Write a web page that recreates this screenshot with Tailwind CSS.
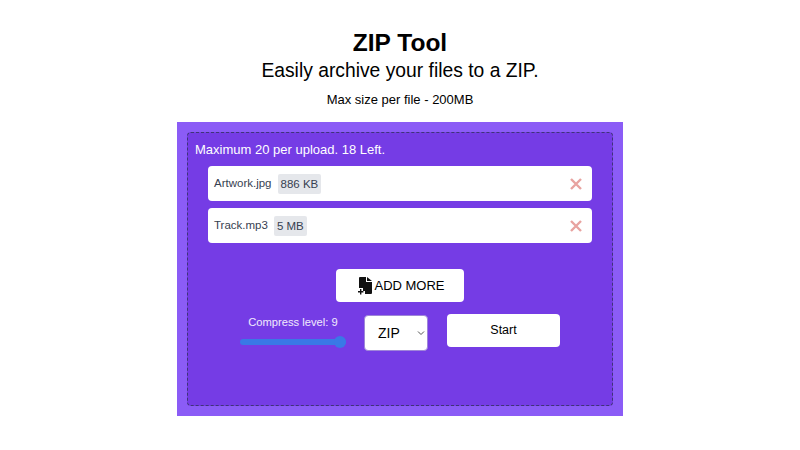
<!DOCTYPE html>
<html lang="en">
    <head>
        <meta charset="UTF-8" />
        <meta name="viewport" content="width=device-width, initial-scale=1.0" />
        <title>ZIP Tool</title>
        <script src="https://cdn.jsdelivr.net/npm/@tailwindcss/browser@4"></script>
    </head>
    <body class="bg-white h-[450px] overflow-hidden flex flex-col items-center font-['Liberation_Sans',Arial,sans-serif] text-black">
        <h1 class="mt-[29px] text-[24.5px] leading-[28px] font-bold">ZIP Tool</h1>
        <p class="text-[19.3px] leading-[28px]">Easily archive your files to a ZIP.</p>
        <p class="mt-[7px] text-[13px] leading-[16px]">Max size per file - 200MB</p>

        <div class="mt-[14px] w-[446px] h-[294px] bg-[#8b5cf6] p-[10px]">
            <div class="h-full bg-[#753ce5] border border-dashed border-[#3f3477] rounded-[4px] flex flex-col">
                <p class="mt-[9px] ml-[7px] text-[13px] leading-[16px] text-white">Maximum 20 per upload. 18 Left.</p>

                <div class="mt-[8px] mx-[20px] flex flex-col gap-[7px]">
                    <div class="h-[35px] bg-white rounded-[4px] flex items-center pl-[6px] pr-[10px] text-[11.5px] text-[#374151]">
                        <span>Artwork.jpg</span>
                        <span class="ml-[6px] px-[3px] h-[20px] leading-[20px] bg-[#e5e7eb] rounded-[2px]">886 KB</span>
                        <svg class="ml-auto" width="12" height="12" viewBox="0 0 12 12" fill="none" stroke="#e8a3a0" stroke-width="2.4">
                            <path d="M1 1L11 11M11 1L1 11" />
                        </svg>
                    </div>
                    <div class="h-[35px] bg-white rounded-[4px] flex items-center pl-[6px] pr-[10px] text-[11.5px] text-[#374151]">
                        <span>Track.mp3</span>
                        <span class="ml-[6px] px-[3px] h-[20px] leading-[20px] bg-[#e5e7eb] rounded-[2px]">5 MB</span>
                        <svg class="ml-auto" width="12" height="12" viewBox="0 0 12 12" fill="none" stroke="#e8a3a0" stroke-width="2.4">
                            <path d="M1 1L11 11M11 1L1 11" />
                        </svg>
                    </div>
                </div>

                <button class="mt-[26px] self-center w-[128px] h-[33px] bg-white rounded-[4px] flex items-center justify-center gap-[2px] pl-[3px] text-[13px]">
                    <svg width="14" height="18" viewBox="0 0 14 18" fill="#111">
                        <path d="M2 0H8V5H14V16A1 1 0 0 1 13 17H7V14H5V11H1V1A1 1 0 0 1 2 0Z" />
                        <path d="M9 0L14 4H9Z" />
                        <path d="M2 12H3.4V14H5.4V15.4H3.4V17.5H2V15.4H0V14H2Z" />
                    </svg>
                    ADD MORE
                </button>

                <div class="mt-[12px] ml-[52px] flex items-start">
                    <div class="w-[106px] flex flex-col items-center pt-[1px]">
                        <label for="level" class="text-[11.2px] leading-[14px] text-white/90">Compress level: 9</label>
                        <input id="level" type="range" min="0" max="9" value="9" class="mt-[5px] w-[106px] h-[16px] m-0 appearance-none bg-transparent [&::-webkit-slider-runnable-track]:h-[6px] [&::-webkit-slider-runnable-track]:rounded-full [&::-webkit-slider-runnable-track]:bg-[#3a78e6] [&::-webkit-slider-thumb]:appearance-none [&::-webkit-slider-thumb]:w-[12px] [&::-webkit-slider-thumb]:h-[12px] [&::-webkit-slider-thumb]:mt-[-3px] [&::-webkit-slider-thumb]:rounded-full [&::-webkit-slider-thumb]:bg-[#3a78e6]" />
                    </div>
                    <div class="relative ml-[18px] mt-[1px] w-[64px] h-[36px] bg-white rounded-[4px] border border-[#9f86d8]">
                        <select class="w-full h-full appearance-none bg-transparent pl-[13px] text-[14px] outline-none">
                            <option>ZIP</option>
                        </select>
                        <svg class="absolute right-[2px] top-[14px] pointer-events-none" width="8" height="6" viewBox="0 0 8 6" fill="none" stroke="#555" stroke-width="1">
                            <path d="M1 1.5L4 4.5L7 1.5" />
                        </svg>
                    </div>
                    <button class="ml-[19px] w-[113px] h-[33px] bg-white rounded-[4px] text-[12.5px]">Start</button>
                </div>
            </div>
        </div>
    </body>
</html>
